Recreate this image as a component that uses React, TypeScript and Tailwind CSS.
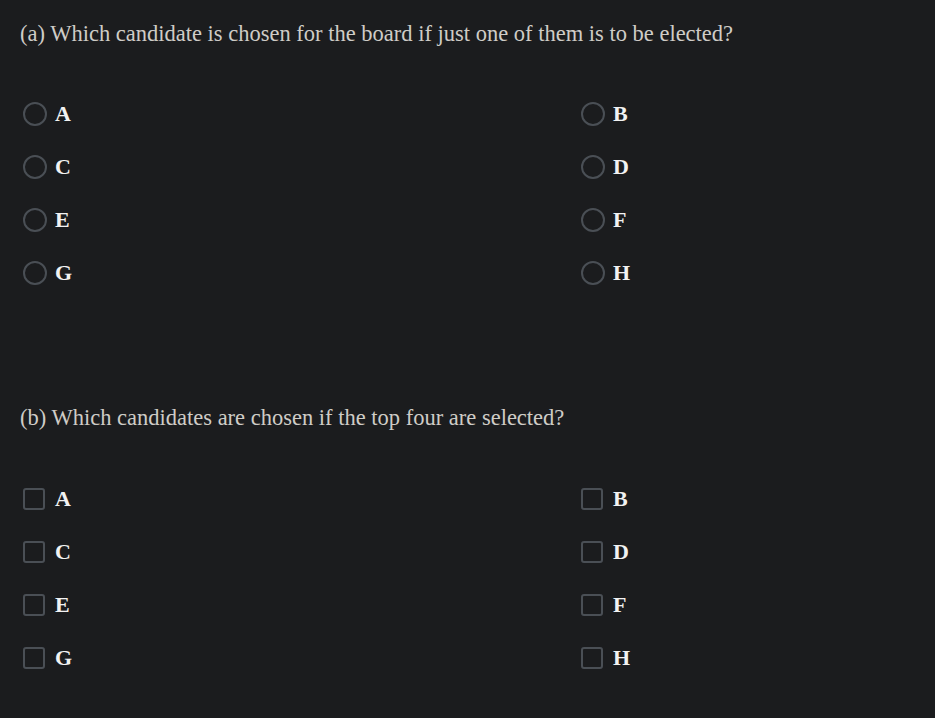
import React from 'react';

const SERIF = 'font-["Liberation_Serif","Times_New_Roman",serif]';

const LETTERS = ['A', 'B', 'C', 'D', 'E', 'F', 'G', 'H'];

function Radio() {
    return <span className="block h-6 w-6 shrink-0 rounded-full border-2 border-[#4a4f55]" />;
}

function Box() {
    return <span className="mr-[2px] block h-[22px] w-[22px] shrink-0 rounded-[3px] border-2 border-[#4a4f55]" />;
}

function Options({ kind }: { kind: 'radio' | 'check' }) {
    return (
        <div className="grid grid-cols-[558px_1fr] pl-[23px]">
            {LETTERS.map((l) => (
                <label key={l} className="flex h-[53px] items-center gap-[8px]">
                    {kind === 'radio' ? <Radio /> : <Box />}
                    <span className="text-[22px] font-bold text-[#f2f2f2]">{l}</span>
                </label>
            ))}
        </div>
    );
}

export default function App() {
    return (
        <div className={`min-h-[718px] w-full bg-[#1b1c1e] ${SERIF}`}>
            <div className="pt-[19px]">
                <p className="pl-[20px] text-[22.5px] leading-[30px] text-[#cfccc7]">
                    (a) Which candidate is chosen for the board if just one of them is to be elected?
                </p>
                <div className="mt-[38px]">
                    <Options kind="radio" />
                </div>
            </div>
            <div className="mt-[104px]">
                <p className="pl-[20px] text-[22.5px] leading-[30px] text-[#cfccc7]">
                    (b) Which candidates are chosen if the top four are selected?
                </p>
                <div className="mt-[39px]">
                    <Options kind="check" />
                </div>
            </div>
        </div>
    );
}
